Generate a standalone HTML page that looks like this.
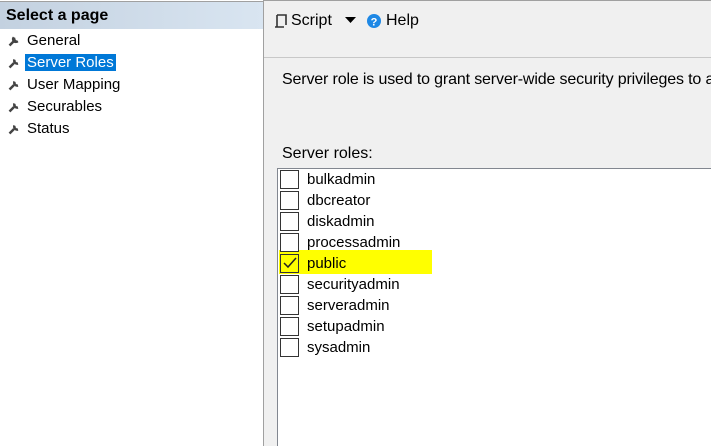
<!DOCTYPE html><html><head><style>
html,body{margin:0;width:711px;height:446px;overflow:hidden}
body{font-family:"Liberation Sans",sans-serif;font-size:15px;color:#000;background:#f0f0f0;position:relative}
.l{position:absolute;left:0;top:0;width:263px;height:446px;background:#fff;border-right:1px solid #a0a0a0}
.hd{position:absolute;left:0;top:1px;width:263px;height:28px;background:linear-gradient(90deg,#c3d1e0,#d9e5f1);font-weight:bold;font-size:16px;line-height:28px;padding-left:6px;box-sizing:border-box;border-top:1px solid #a0a0a0}
.it{position:absolute;left:8px;height:21px;line-height:21px}
.it span{margin-left:17px;padding:0 2px}
.w{position:absolute;left:0;top:5px}
.tb{position:absolute;left:264px;top:0;right:0;height:56px;border-bottom:1px solid #c8c8c8;border-top:1px solid #a0a0a0}
.lb{position:absolute;left:277px;top:168px;width:440px;height:290px;background:#fff;border:1px solid #828790}
.r{position:absolute;left:2px;height:21px;line-height:21px}
.cb{position:absolute;left:0;top:1px;width:17px;height:17px;border:1px solid #333;background:#fff}
.r span{position:absolute;left:27px;white-space:nowrap}
</style></head><body>
<div class="l">
<div class="hd">Select a page</div>
<div class="it" style="top:30px"><svg class="w" width="12" height="12" viewBox="0 0 12 12"><path d="M1.5 10.5L6 6" stroke="#444" stroke-width="2.5"/><path d="M5 1.5a3.5 3.5 0 0 0 5.5 5.5L8.5 5.5 7 4z" fill="#444"/><path d="M6.5 2.5a3 3 0 0 0 3.5 4" stroke="#444" stroke-width="2" fill="none"/></svg><span>General</span></div>
<div class="it" style="top:52px"><svg class="w" width="12" height="12" viewBox="0 0 12 12"><path d="M1.5 10.5L6 6" stroke="#444" stroke-width="2.5"/><path d="M6.5 2.5a3 3 0 0 0 3.5 4" stroke="#444" stroke-width="2.5" fill="none"/></svg><span style="background:#0078d7;color:#fff">Server Roles</span></div>
<div class="it" style="top:74px"><svg class="w" width="12" height="12" viewBox="0 0 12 12"><path d="M1.5 10.5L6 6" stroke="#444" stroke-width="2.5"/><path d="M6.5 2.5a3 3 0 0 0 3.5 4" stroke="#444" stroke-width="2.5" fill="none"/></svg><span>User Mapping</span></div>
<div class="it" style="top:96px"><svg class="w" width="12" height="12" viewBox="0 0 12 12"><path d="M1.5 10.5L6 6" stroke="#444" stroke-width="2.5"/><path d="M6.5 2.5a3 3 0 0 0 3.5 4" stroke="#444" stroke-width="2.5" fill="none"/></svg><span>Securables</span></div>
<div class="it" style="top:118px"><svg class="w" width="12" height="12" viewBox="0 0 12 12"><path d="M1.5 10.5L6 6" stroke="#444" stroke-width="2.5"/><path d="M6.5 2.5a3 3 0 0 0 3.5 4" stroke="#444" stroke-width="2.5" fill="none"/></svg><span>Status</span></div>
</div>
<div class="tb">
<svg style="position:absolute;left:10px;top:13px" width="13" height="14" viewBox="0 0 13 14"><path d="M3 1h9v10M3 1v12h-2M3 13h7" stroke="#333" stroke-width="1.6" fill="none"/></svg>
<span style="position:absolute;left:27px;top:11px;font-size:16px">Script</span>
<svg style="position:absolute;left:81px;top:16px" width="11" height="7"><path d="M0 0h11L5.5 6z" fill="#000"/></svg>
<svg style="position:absolute;left:103px;top:13px" width="14" height="14"><circle cx="7" cy="7" r="7" fill="#1e88e5"/><text x="7" y="11.5" font-size="11" font-weight="bold" fill="#fff" text-anchor="middle" font-family="Liberation Sans">?</text></svg>
<span style="position:absolute;left:122px;top:11px;font-size:16px">Help</span>
</div>
<div style="position:absolute;left:282px;top:71px;font-size:16px;white-space:nowrap;letter-spacing:-0.15px">Server role is used to grant server-wide security privileges to a</div>
<div style="position:absolute;left:282px;top:145px;font-size:16px">Server roles:</div>
<div class="lb">
<div style="position:absolute;left:1px;top:81px;width:153px;height:24px;background:#ffff00"></div>
<div class="r" style="top:0"><div class="cb"></div><span>bulkadmin</span></div>
<div class="r" style="top:21px"><div class="cb"></div><span>dbcreator</span></div>
<div class="r" style="top:42px"><div class="cb"></div><span>diskadmin</span></div>
<div class="r" style="top:63px"><div class="cb"></div><span>processadmin</span></div>
<div class="r" style="top:84px"><div class="cb" style="background:transparent"><svg width="17" height="17"><path d="M3 8l4 4 8-9" stroke="#222" stroke-width="1.5" fill="none"/></svg></div><span>public</span></div>
<div class="r" style="top:105px"><div class="cb"></div><span>securityadmin</span></div>
<div class="r" style="top:126px"><div class="cb"></div><span>serveradmin</span></div>
<div class="r" style="top:147px"><div class="cb"></div><span>setupadmin</span></div>
<div class="r" style="top:168px"><div class="cb"></div><span>sysadmin</span></div>
</div>
</body></html>
